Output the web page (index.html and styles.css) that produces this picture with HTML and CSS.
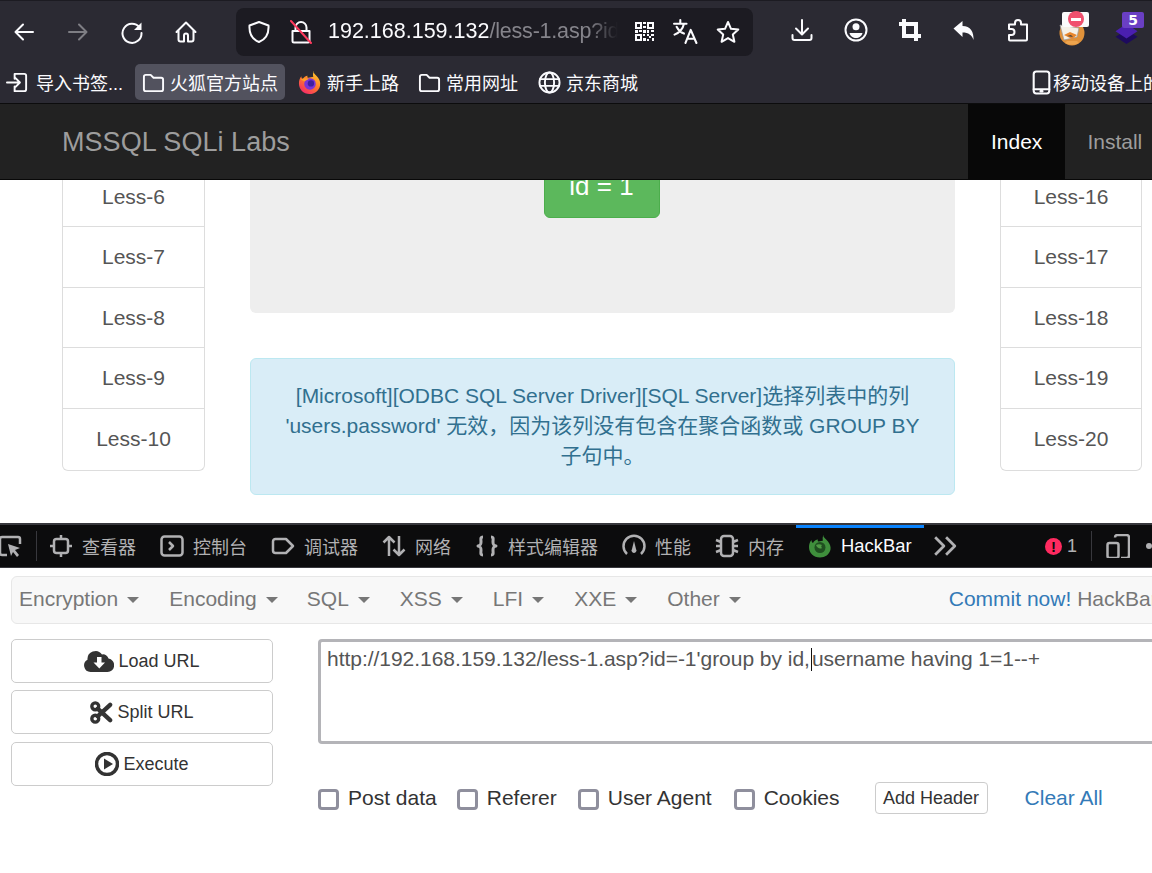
FILE: index.html
```html
<!DOCTYPE html>
<html lang="zh-CN">
<head>
<meta charset="utf-8">
<title>MSSQL SQLi Labs</title>
<link rel="stylesheet" href="styles.css">
</head>
<body>
<div class="toolbar">
  <span class="tb-btn"><svg class="ic" viewBox="0 0 24 24"><path d="M21 12H4M11 4.500 3.500 12l7.500 7.500"/></svg></span>
  <span class="tb-btn dim"><svg class="ic" viewBox="0 0 24 24"><path d="M3 12h17M13 4.500l7.500 7.500-7.500 7.500"/></svg></span>
  <span class="tb-btn"><svg class="ic" viewBox="0 0 24 24"><path d="M19.500 7.500A9.500 9.500 0 1 0 21.500 13"/><path class="fill" d="M21.500 2.500v7.500h-7.500z"/></svg></span>
  <span class="tb-btn"><svg class="ic" viewBox="0 0 24 24"><path d="M2.500 12 12 2.500 21.500 12M4.500 10.500v9a2 2 0 0 0 2 2h3.500v-6a2 2 0 0 1 4 0v6h3.500a2 2 0 0 0 2-2v-9"/></svg></span>
  <div class="urlbar">
    <svg class="ic url-shield" viewBox="0 0 24 24"><path d="M12 2 21.500 5.500c.5 8-2 13.500-9.500 16.500C4.500 19 2 13.500 2.500 5.500z"/></svg>
    <svg class="ic url-lock" viewBox="0 0 24 24"><path d="M6.500 11V7.500a5.500 5.500 0 0 1 11 0V11M3.500 11h17v10a1.500 1.500 0 0 1-1.500 1.500H5A1.500 1.500 0 0 1 3.500 21z"/><path class="slash" d="M2 1 22 23"/></svg>
    <span class="url-text">192.168.159.132<span class="url-rest">/less-1.asp?id</span></span>
    <svg class="ic url-qr" viewBox="0 0 21 21"><path class="qr" d="M1 1h7v7H1zM3 3v3h3V3zM13 1h7v7h-7zM15 3v3h3V3zM1 13h7v7H1zM3 15v3h3v-3zM9 1h3v2H9zM9 5h3v2H9zM9 9h3v3H9zM1 9h3v3H1zM5 9h3v2H5zM13 9h2v3h-2zM17 9h3v2h-3zM9 13h2v2H9zM13 13h2v2h-2zM17 13h3v2h-3zM9 17h3v3H9zM15 15h2v2h-2zM13 18h2v2h-2zM18 17h2v3h-2z"/></svg>
    <svg class="ic url-tr" viewBox="0 0 24 24"><path d="M1 4.500h12M7 1v3.500M10.500 4.500C9.500 9.500 6 13 1.500 15M3.500 7.500c1.500 3 4 5.500 7 6.500M12 23l5-12.500L22.500 23M13.800 19h7"/></svg>
    <svg class="ic url-star" viewBox="0 0 24 24"><path d="M12 2l3 6.800 7.300.8-5.500 4.900 1.600 7.300L12 18.100l-6.400 3.700 1.600-7.300L1.700 9.600 9 8.800z"/></svg>
  </div>
  <div class="tb-right">
    <span class="tb-btn"><svg class="ic" viewBox="0 0 24 24"><path d="M12 2v14M6 10.500l6 6 6-6M2.500 17v3a2 2 0 0 0 2 2h15a2 2 0 0 0 2-2v-3"/></svg></span>
    <span class="tb-btn"><svg class="ic" viewBox="0 0 24 24"><circle cx="12" cy="12" r="10.500"/><circle class="fill" cx="12" cy="8.800" r="3.500"/><path class="fill" d="M5.500 15h13c-.8 3.500-3.500 5-6.500 5s-5.700-1.500-6.500-5z"/></svg></span>
    <span class="tb-btn"><svg class="ic thick" viewBox="0 0 24 24"><path d="M6 1v17h17M1 6h17v17"/></svg></span>
    <span class="tb-btn"><svg class="ic" viewBox="0 0 24 24"><path class="fill" d="M1.500 10.500 10.500 3v5c8 0 11.500 6 11 14-1.500-5-5-7.500-11-7.500V19z"/></svg></span>
    <span class="tb-btn"><svg class="ic" viewBox="0 0 24 24"><path d="M3 21.500V17h2.500a3 3 0 0 0 0-6H3V6.500h6V5a3 3 0 0 1 6 0v1.500h6v15a1 1 0 0 1-1 1H4a1 1 0 0 1-1-1z"/></svg></span>
    <span class="tb-btn ext">
      <svg class="ext-fox" viewBox="0 0 26 26"><circle cx="13" cy="13" r="12.500" fill="#e0913a"/><path d="M1 5l19 3-2 9-13 3z" fill="#f5f0e6" stroke="#9a9a9a" stroke-width=".7"/><path d="M5 15l6-3 7 3-5 4z" fill="#e8862c"/><path d="M8 16l4-1 2 2z" fill="#4a4540"/><path d="M6 23c4 2 10 2 14 0l-2-2H8z" fill="#eda44e"/></svg>
      <span class="badge-stop"><span class="stop-dot"></span></span>
    </span>
    <span class="tb-btn ext">
      <svg class="ext-stack" viewBox="0 0 24 24"><path d="M12 9l12 7-12 8L0 16z" fill="#1d0a5e"/><path d="M12 2l12 8-12 8L0 10z" fill="#4a1fb0"/></svg>
      <span class="badge-five">5</span>
    </span>
  </div>
</div>

<div class="bookmarks">
  <span class="bm bm-import"><svg class="ic" viewBox="0 0 24 24"><path d="M9 3h10a2 2 0 0 1 2 2v14a2 2 0 0 1-2 2H9M9 3v5M9 21v-5M1 12h13M10 7.500l4.500 4.500-4.500 4.500"/></svg>导入书签...</span>
  <span class="bm bm-active"><svg class="ic" viewBox="0 0 24 24"><path d="M2 6a2 2 0 0 1 2-2h5l3 3h8a2 2 0 0 1 2 2v10a2 2 0 0 1-2 2H4a2 2 0 0 1-2-2z"/></svg>火狐官方站点</span>
  <span class="bm bm-fx"><svg class="fx" viewBox="0 0 24 26"><defs><linearGradient id="fxg" x1="0.800" y1="0" x2="0.200" y2="1"><stop offset="0" stop-color="#ffd02e"/><stop offset=".5" stop-color="#ff7a2a"/><stop offset="1" stop-color="#f5246e"/></linearGradient></defs><path d="M16 1c.3 3 3 4.500 5 7 2 2.800 2.500 5.500 2 8-1 5.500-5.500 9-11 9C5.500 25 1 20 1 14c0-3 .8-5.500 2.500-7.500 0 1.500.5 2.500 1.500 3 1-2 3-3.500 5-3.500-.5 1-.3 1.700.5 2 2-.5 4-.5 5.500-1-.7-1.500-.3-4 .5-6z" fill="url(#fxg)"/><circle cx="12.500" cy="14.500" r="6" fill="#7a35d8"/><circle cx="13.500" cy="14" r="3.300" fill="#3f1fa0"/><path d="M3 9.500c2-1 5-1.500 8 0-1.500 1-3 1-4 2.500-1.500-1-3-1.500-4-2.500z" fill="#ffa02a"/></svg>新手上路</span>
  <span class="bm bm-folder"><svg class="ic" viewBox="0 0 24 24"><path d="M2 6a2 2 0 0 1 2-2h5l3 3h8a2 2 0 0 1 2 2v10a2 2 0 0 1-2 2H4a2 2 0 0 1-2-2z"/></svg>常用网址</span>
  <span class="bm bm-globe"><svg class="ic" viewBox="0 0 24 24"><circle cx="12" cy="12" r="10.500"/><ellipse cx="12" cy="12" rx="4.800" ry="10.500"/><path d="M2 8.500h20M2 15.500h20"/></svg>京东商城</span>
  <span class="bm bm-mobile"><svg class="ic phone" viewBox="0 0 18 24"><rect x="1.500" y="1.500" width="15" height="21" rx="2.500"/><path d="M1.500 18.500h15M8 20.500h2"/></svg>移动设备上的书签</span>
</div>

<header class="navbar">
  <span class="brand">MSSQL SQLi Labs</span>
  <nav class="nav-tabs">
    <span class="nav-item current">Index</span>
    <span class="nav-item install">Install</span>
  </nav>
</header>

<main class="page">
  <div class="page-inner">
    <ul class="list">
      <li>Less-6</li><li>Less-7</li><li>Less-8</li><li>Less-9</li><li>Less-10</li>
    </ul>
    <div class="center">
      <div class="jumbotron"><span class="btn-success">id = 1</span></div>
      <div class="alert">[Microsoft][ODBC SQL Server Driver][SQL Server]选择列表中的列<br>'users.password' 无效，因为该列没有包含在聚合函数或 GROUP BY<br>子句中。</div>
    </div>
    <ul class="list">
      <li>Less-16</li><li>Less-17</li><li>Less-18</li><li>Less-19</li><li>Less-20</li>
    </ul>
  </div>
</main>

<div class="devtools">
  <span class="dt-pick"><svg class="dti" viewBox="0 0 24 24"><path d="M9 21H4a2 2 0 0 1-2-2V5a2 2 0 0 1 2-2h16a2 2 0 0 1 2 2v5"/><path class="dtfill" d="M10 10l12 4-5 2 4 5-2 2-4-5-2 4z"/></svg></span>
  <span class="dt-sep"></span>
  <span class="dt-tab t1"><svg class="dti" viewBox="0 0 24 24"><rect x="5" y="5" width="14" height="14" rx="2.500"/><path d="M12 1v4M12 19v4M1 12h4M19 12h4"/></svg>查看器</span>
  <span class="dt-tab t2"><svg class="dti" viewBox="0 0 24 24"><rect x="1.500" y="2.500" width="21" height="19" rx="3"/><path d="M9 8l4 4-4 4"/></svg>控制台</span>
  <span class="dt-tab t3"><svg class="dti" viewBox="0 0 24 24"><path d="M2 7.500A2.500 2.500 0 0 1 4.500 5H15l7 7-7 7H4.500A2.500 2.500 0 0 1 2 16.500z"/></svg>调试器</span>
  <span class="dt-tab t4"><svg class="dti" viewBox="0 0 24 24"><path d="M7 22V3M1.500 8.500 7 3l5.500 5.500M17 2v19M11.500 15.500 17 21l5.500-5.500"/></svg>网络</span>
  <span class="dt-tab t5"><svg class="dti braces" viewBox="0 0 24 24"><path d="M8 3C5 3 6 5 6 8s-1 3.500-3 4c2 .5 3 1 3 4s-1 5 2 5M16 3c3 0 2 2 2 5s1 3.500 3 4c-2 .5-3 1-3 4s1 5-2 5"/></svg>样式编辑器</span>
  <span class="dt-tab t6"><svg class="dti" viewBox="0 0 24 24"><path d="M5 20A10.500 10.500 0 1 1 19 20"/><path class="dtfill" d="M10 15l2-8 2 8a2.500 2.500 0 1 1-4 0z"/></svg>性能</span>
  <span class="dt-tab t7"><svg class="dti" viewBox="0 0 24 24"><rect x="6" y="2" width="12" height="20" rx="3"/><path d="M1 6l5 2M1 12h5M1 18l5-2M23 6l-5 2M23 12h-5M23 18l-5-2"/></svg>内存</span>
  <span class="dt-tab t8"><svg class="hb" viewBox="0 0 24 24"><path d="M15 1c.3 2.500 3 4 5 6.500 2 2.800 3 5.500 2.500 8-1 5-5.500 8-10.500 8C5.500 23.500 1 19 1 13c0-3 .8-5 2.500-7 0 1.500.5 2.500 1.500 3 1-2 3-3.500 5-3.500-.5 1-.3 1.700.5 2 2-.5 3.500-.5 4.500-1-.7-1.500-.3-4 .5-5.500z" fill="#3f8f3c"/><circle cx="12" cy="13.500" r="5.500" fill="#1f4f20"/><path d="M8 11c2-1 4-1 6 0-1 1-1 2 0 3-2 1.500-5 0-6-3z" fill="#4f9a45"/></svg>HackBar</span>
  <span class="dt-more"><svg class="dti" viewBox="0 0 22 20"><path d="M2 2l8 8-8 8M12 2l8 8-8 8"/></svg></span>
  <span class="dt-right">
    <span class="err"><span class="err-dot">!</span>1</span>
    <span class="dt-sep sep2"></span>
    <svg class="dti resp" viewBox="0 0 24 24"><path d="M9 3.500A2.500 2.500 0 0 1 11.500 1h9A2.500 2.500 0 0 1 23 3.500v18A2.500 2.500 0 0 1 20.500 24H15"/><rect x="1.500" y="9" width="11" height="15" rx="2"/></svg>
    <span class="dots"></span>
  </span>
</div>

<section class="hackbar">
  <div class="hb-nav">
    <span class="hb-item i1">Encryption<i class="caret"></i></span>
    <span class="hb-item i2">Encoding<i class="caret"></i></span>
    <span class="hb-item i3">SQL<i class="caret"></i></span>
    <span class="hb-item i4">XSS<i class="caret"></i></span>
    <span class="hb-item i5">LFI<i class="caret"></i></span>
    <span class="hb-item i6">XXE<i class="caret"></i></span>
    <span class="hb-item">Other<i class="caret"></i></span>
    <span class="hb-commit"><span class="link">Commit now!</span> HackBar</span>
  </div>
  <div class="hb-body">
    <div class="hb-buttons">
      <button class="hb-btn"><svg class="gly cloud" viewBox="0 0 30 22"><path d="M6.500 22A6.500 6.500 0 0 1 3.500 9.800 8 8 0 0 1 18 4.500a5.500 5.500 0 0 1 6.500 4A6.800 6.800 0 0 1 23.500 22z"/><path class="gly-cut" d="M13 7h4.500v5.500h3.500l-5.700 6-5.800-6H13z"/></svg> Load URL</button>
      <button class="hb-btn"><svg class="gly sc" viewBox="0 0 24 24"><circle cx="5.500" cy="5.500" r="3.600" class="ring"/><circle cx="5.500" cy="18.500" r="3.600" class="ring"/><path class="blade" d="M8 8l13 12M8 16 21 4"/></svg> Split URL</button>
      <button class="hb-btn"><svg class="gly pl" viewBox="0 0 24 24"><circle cx="12" cy="12" r="10.500" class="ring"/><path d="M9 6.500 18 12l-9 5.500z"/></svg> Execute</button>
    </div>
    <div class="hb-main">
      <div class="hb-textarea">http://192.168.159.132/less-1.asp?id=-1'group by id,<span class="cursor"></span>username having 1=1--+</div>
      <div class="hb-opts">
        <span class="opt o1"><i class="check"></i>Post data</span>
        <span class="opt o2"><i class="check"></i>Referer</span>
        <span class="opt o3"><i class="check"></i>User Agent</span>
        <span class="opt o4"><i class="check"></i>Cookies</span>
        <button class="add-header">Add Header</button>
        <span class="clear">Clear All</span>
      </div>
    </div>
  </div>
</section>
</body>
</html>
```
FILE: styles.css
```css
* { box-sizing: border-box; }
html, body { margin: 0; padding: 0; }
body {
  width: 1152px; height: 873px; overflow: hidden; background: #fff;
  font-family: "Liberation Sans", "Noto Sans CJK SC", sans-serif;
}
ul { list-style: none; margin: 0; padding: 0; }
.ic { fill: none; stroke: #fbfbfe; stroke-width: 2; width: 24px; height: 24px; flex: none; stroke-linejoin: round; stroke-linecap: round; }
.ic .fill { fill: #fbfbfe; stroke: none; }
.ic.thick { stroke-width: 4; stroke-linecap: butt; stroke-linejoin: miter; }

.toolbar { height: 62px; background: #2b2a33; border-top: 1px solid #1c1b22; display: flex; align-items: center; padding-left: 0; }
.tb-btn { width: 54px; flex: none; display: flex; justify-content: center; position: relative; }
.toolbar > .tb-btn:first-child { margin-left: -3px; }
.tb-btn.dim .ic { opacity: .4; }
.urlbar { margin-left: 23px; width: 517px; height: 48px; background: #1c1b22; border-radius: 8px; display: flex; align-items: center; padding-left: 11px; flex: none; }
.url-shield { margin-right: 18px; }
.url-lock { margin-right: 15px; }
.slash { stroke: #ff3a5e; }
.url-text { color: #fbfbfe; font-size: 21.500px; width: 290px; white-space: nowrap; overflow: hidden; flex: none; -webkit-mask-image: linear-gradient(to right, #000 90%, transparent 100%); mask-image: linear-gradient(to right, #000 90%, transparent 100%); }
.url-rest { color: #85848b; letter-spacing: -.2px; }
.url-qr { margin-left: 16px; width: 21px; height: 21px; }
.url-qr .qr { fill: #fbfbfe; stroke: none; fill-rule: evenodd; }
.url-tr { margin-left: 18px; width: 25px; height: 25px; }
.url-star { margin-left: 18px; }
.tb-right { display: flex; margin-left: 22px; }
.ext-fox { width: 26px; height: 26px; margin-top: 2px; }
.badge-stop { position: absolute; left: 17px; top: -6px; width: 27px; height: 15px; background: #fbfbfb; border-radius: 2px; display: flex; align-items: center; justify-content: center; }
.stop-dot { width: 16px; height: 16px; border-radius: 50%; background: #f0506e; position: relative; flex: none; }
.stop-dot::after { content: ""; position: absolute; left: 3px; right: 3px; top: 6.500px; height: 3px; background: #fff; }
.ext-stack { width: 25px; height: 22px; margin-top: 4px; }
.badge-five { position: absolute; left: 23px; top: -6px; width: 22px; height: 16px; background: #6a3fc4; color: #fff; border-radius: 2px; font-size: 14px; font-weight: 700; text-align: center; line-height: 16px; font-family: "DejaVu Sans", sans-serif; }

.bookmarks { height: 42px; background: #2b2a33; display: flex; align-items: center; position: relative; border-bottom: 1px solid #0c0c0d; padding-bottom: 1px; }
.bm { display: flex; align-items: center; gap: 5px; color: #fbfbfe; font-size: 18px; height: 36px; white-space: nowrap; flex: none; }
.bm .ic { width: 23px; height: 23px; }
.bm-import { margin-left: 6px; width: 129px; gap: 7px; }
.bm-active { background: #52525e; width: 150px; border-radius: 5px; padding-left: 7px; gap: 5px; }
.bm-fx { margin-left: 13px; width: 120px; gap: 6px; }
.fx { width: 23px; height: 25px; }
.bm-folder { width: 120px; }
.bm-mobile { margin-left: 394px; gap: 2px; }
.bm-mobile .phone { width: 19px; height: 25px; }

.navbar { height: 76px; background: #222; border-bottom: 1px solid #080808; display: flex; justify-content: space-between; padding-left: 62px; }
.brand { font-size: 27px; color: #9d9d9d; line-height: 76px; letter-spacing: .05px; }
.nav-tabs { display: flex; width: 184px; flex: none; }
.nav-item { font-size: 21px; color: #9d9d9d; padding: 0 23px; line-height: 75px; white-space: nowrap; }
.nav-item.current { background: #080808; color: #fff; }
.nav-item.install { padding-left: 22px; }

.page { height: 343px; overflow: hidden; background: #fff; }
.page-inner { display: flex; padding-left: 62px; align-items: flex-start; margin-top: -16px; }
.list { width: 143px; flex: none; border: 1px solid #ddd; border-top: 0; border-radius: 0 0 6px 6px; }
.list li { height: 60.500px; border-top: 1px solid #ddd; font-size: 21px; color: #555; text-align: center; line-height: 60px; }
.list li:first-child { height: 62px; border-top: 0; line-height: 56px; padding-top: 5px; }
.list li:last-child { height: 62px; }
.list:last-child { width: 142px; margin-left: 45px; }
.center { width: 705px; margin-left: 45px; flex: none; }
.jumbotron { height: 149px; background: #eee; border-radius: 0 0 6px 6px; display: flex; justify-content: center; align-items: flex-start; }
.btn-success { width: 116px; height: 54px; background: #5cb85c; border: 1px solid #4cae4c; border-radius: 6px; color: #fff; font-size: 26px; text-align: center; line-height: 42px; margin-right: 2px; }
.alert { margin-top: 45px; height: 137px; background: #d9edf7; border: 1px solid #bce8f1; border-radius: 6px; color: #31708f; font-size: 21px; line-height: 30px; text-align: center; padding: 22px 10px 0; white-space: nowrap; }

.devtools { height: 45px; background: #0c0c0d; border-top: 2px solid #38383d; border-bottom: 1px solid #38383d; display: flex; align-items: center; color: #b1b1b3; font-size: 18px; position: relative; white-space: nowrap; }
.dti { width: 24px; height: 24px; fill: none; stroke: #b1b1b3; stroke-width: 2.500; flex: none; stroke-linejoin: round; }
.dti .dtfill { fill: #b1b1b3; stroke: none; }
.dti.braces { stroke-width: 3; }
.dt-pick { margin-left: -2px; display: flex; }
.dt-sep { width: 1px; height: 30px; background: #38383d; flex: none; margin-left: 14px; }
.dt-tab { display: flex; align-items: center; gap: 9px; height: 42px; flex: none; }
.t1 { margin-left: 12px; }
.t2, .t3, .t4, .t5, .t6, .t7 { margin-left: 24px; }
.t8 { margin-left: 12px; width: 128px; padding-left: 12px; border-top: 3px solid #0a84ff; color: #fbfbfe; padding-bottom: 3px; font-size: 18.400px; }
.hb { width: 24px; height: 24px; }
.dt-more { margin-left: 9px; display: flex; }
.dt-right { margin-left: auto; display: flex; align-items: center; flex: none; }
.err { display: flex; align-items: center; gap: 5px; font-size: 18px; }
.err-dot { width: 17px; height: 17px; border-radius: 50%; background: #ff2a5f; color: #0c0c0d; font-weight: 700; font-size: 15px; text-align: center; line-height: 17px; }
.sep2 { margin-left: 14px; }
.resp { margin-left: 14px; }
.dots { width: 6px; height: 6px; border-radius: 50%; background: #b1b1b3; margin-left: 16px; }

.hackbar { height: 305px; background: #fff; overflow: hidden; padding-top: 8px; }
.hb-nav { height: 48px; margin-left: 11px; width: 1170px; background: #f8f8f8; border: 1px solid #e7e7e7; border-radius: 6px; display: flex; align-items: center; padding-left: 7px; padding-bottom: 2px; font-size: 21px; color: #777; white-space: nowrap; flex: none; }
.hb-item { display: flex; align-items: center; margin-right: 30px; flex: none; }
.hb-item.i2 { margin-right: 29px; }
.caret { display: inline-block; width: 0; height: 0; margin-left: 9px; margin-top: 2px; border-top: 6px solid #777; border-left: 6px solid transparent; border-right: 6px solid transparent; }
.hb-commit { margin-left: 178px; flex: none; }
.link { color: #337ab7; }
.hb-body { display: flex; padding: 15px 0 0 11px; align-items: flex-start; }
.hb-buttons { width: 262px; flex: none; display: flex; flex-direction: column; gap: 7px; }
.hb-btn { height: 44px; background: #fff; border: 1px solid #ccc; border-radius: 5px; color: #333; font: 18px "Liberation Sans", sans-serif; display: flex; align-items: center; justify-content: center; gap: 4px; padding: 0; }
.hb-btn + .hb-btn + .hb-btn { margin-top: 1px; }
.gly { fill: #333; height: 24px; width: 24px; }
.gly.cloud { width: 30px; height: 22px; }
.gly .ring { fill: none; stroke: #333; stroke-width: 3.500; }
.gly .blade { fill: none; stroke: #333; stroke-width: 4.500; stroke-linecap: round; }
.gly .gly-cut { fill: #fff; }
.gly.sc { width: 23px; height: 23px; }
.hb-main { margin-left: 45px; width: 900px; flex: none; }
.hb-textarea { height: 105px; border: 3px solid #b4b4b8; border-right: 0; border-radius: 4px 0 0 4px; padding: 5px 6px; font-size: 21px; letter-spacing: -.03px; color: #555; white-space: nowrap; line-height: 24px; }
.cursor { display: inline-block; width: 1px; height: 23px; background: #111; vertical-align: -5px; margin: 0 0 0 1px; }
.hb-opts { display: flex; align-items: center; height: 32px; margin-top: 38px; font-size: 21px; color: #333; }
.opt { display: flex; align-items: center; gap: 9px; flex: none; white-space: nowrap; }
.check { width: 21px; height: 21px; border: 3px solid #8f8f9d; border-radius: 4px; background: #fff; flex: none; margin-top: 2px; }
.o2 { margin-left: 20px; }
.o3 { margin-left: 21px; }
.o4 { margin-left: 22px; }
.add-header { margin-left: 35px; width: 113px; height: 32px; padding: 0; background: #fff; border: 1px solid #ccc; border-radius: 4px; color: #333; font: 18px "Liberation Sans", sans-serif; }
.clear { margin-left: 37px; color: #337ab7; }
```
